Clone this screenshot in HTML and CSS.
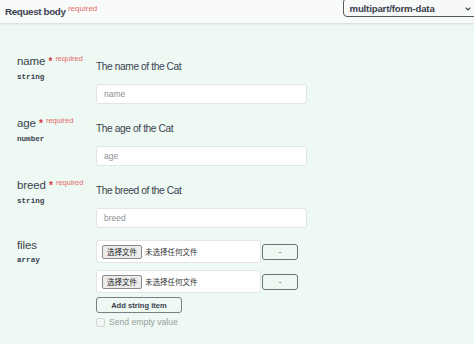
FILE: index.html
```html
<!DOCTYPE html>
<html>
<head>
<meta charset="utf-8">
<link rel="stylesheet" href="styles.css">
</head>
<body>
<div class="section-header">
  <div class="title">Request body <span class="req">required</span></div>
  <div class="select">
    <span>multipart/form-data</span>
    <svg class="chev" width="6" height="4" viewBox="0 0 6 4"><path d="M0.6 0.6 L3 3 L5.4 0.6" fill="none" stroke="#3b4151" stroke-width="1.2"/></svg>
  </div>
</div>
<div class="body">
  <div class="param">
    <div class="param-label">
      <div class="pname">name <span class="star">*</span> <span class="req">required</span></div>
      <div class="ptype">string</div>
    </div>
    <div class="param-value">
      <p class="desc">The name of the Cat</p>
      <input class="text-input" placeholder="name">
    </div>
  </div>
  <div class="param">
    <div class="param-label">
      <div class="pname">age <span class="star">*</span> <span class="req">required</span></div>
      <div class="ptype">number</div>
    </div>
    <div class="param-value">
      <p class="desc">The age of the Cat</p>
      <input class="text-input" placeholder="age">
    </div>
  </div>
  <div class="param">
    <div class="param-label">
      <div class="pname">breed <span class="star">*</span> <span class="req">required</span></div>
      <div class="ptype">string</div>
    </div>
    <div class="param-value">
      <p class="desc">The breed of the Cat</p>
      <input class="text-input" placeholder="breed">
    </div>
  </div>
  <div class="param">
    <div class="param-label">
      <div class="pname">files</div>
      <div class="ptype">array</div>
    </div>
    <div class="param-value files">
      <div class="file-row">
        <div class="file-box"><span class="file-btn">选择文件</span><span class="file-text">未选择任何文件</span></div>
        <button class="minus-btn">-</button>
      </div>
      <div class="file-row">
        <div class="file-box"><span class="file-btn">选择文件</span><span class="file-text">未选择任何文件</span></div>
        <button class="minus-btn">-</button>
      </div>
      <button class="add-btn">Add string item</button>
      <label class="empty-row"><span class="checkbox"></span>Send empty value</label>
    </div>
  </div>
</div>
</body>
</html>
```
FILE: styles.css
```css
html, body {
  margin: 0;
  padding: 0;
}
body {
  width: 474px;
  height: 347px;
  overflow: hidden;
  background: #ffffff;
  font-family: "Liberation Sans", Arial, sans-serif;
  color: #3b4151;
}
.section-header {
  display: flex;
  justify-content: space-between;
  align-items: flex-start;
  height: 23px;
  background: #f8fbf9;
  box-shadow: 0 1px 2px rgba(0, 0, 0, 0.12);
  position: relative;
  z-index: 1;
}
.title {
  padding: 3px 0 0 5px;
  font-size: 9.8px;
  font-weight: bold;
  letter-spacing: -0.35px;
  line-height: 12px;
}
.req {
  font-size: 7.5px;
  font-weight: normal;
  letter-spacing: 0;
  color: #e46a6a;
  vertical-align: 4px;
}
.title .req {
  font-size: 8px;
}
.select {
  flex-shrink: 0;
  width: 135px;
  height: 19px;
  margin-top: -2px;
  margin-right: -4px;
  box-sizing: border-box;
  border: 1.5px solid #555861;
  border-radius: 4px;
  background: #f7f8f8;
  display: flex;
  align-items: center;
  justify-content: space-between;
  padding: 2px 6px 0 5.5px;
  font-size: 9.6px;
  font-weight: bold;
  letter-spacing: -0.15px;
}
.body {
  height: 321px;
  box-sizing: border-box;
  background: #edf9f2;
  padding: 29px 0 0 17px;
}
.param {
  display: grid;
  grid-template-columns: 79px 1fr;
  padding-bottom: 10px;
}
.pname {
  font-size: 11.5px;
  line-height: 14px;
  white-space: nowrap;
  letter-spacing: -0.1px;
}
.star {
  color: #d03b3b;
  font-size: 10px;
  font-weight: bold;
  vertical-align: 0;
}
.ptype {
  font-family: "Liberation Mono", "Courier New", monospace;
  font-weight: bold;
  font-size: 7.6px;
  line-height: 10px;
  margin-top: 3px;
}
.desc {
  margin: 8px 0 0;
  font-size: 10.2px;
  letter-spacing: -0.4px;
  line-height: 14px;
}
.text-input {
  display: block;
  margin-top: 10px;
  width: 211px;
  height: 20px;
  box-sizing: border-box;
  border: 1px solid #e1e6e3;
  border-radius: 3px;
  background: #ffffff;
  padding: 0 7px;
  font-family: "Liberation Sans", Arial, sans-serif;
  font-size: 8.5px;
  color: #3b4151;
  outline: none;
}
.text-input::placeholder {
  color: #8d8f93;
}
.files {
  padding-top: 2px;
}
.file-row {
  display: flex;
  align-items: center;
  gap: 1px;
}
.file-row + .file-row {
  margin-top: 7px;
}
.file-box {
  width: 165px;
  height: 23px;
  box-sizing: border-box;
  border: 1px solid #e1e6e3;
  border-radius: 3px;
  background: #ffffff;
  display: flex;
  align-items: center;
  padding: 0 5px;
  gap: 3px;
  font-family: "Noto Sans CJK SC", sans-serif;
  font-size: 7.5px;
}
.file-btn {
  display: flex;
  align-items: center;
  height: 12px;
  padding: 0 4px;
  border: 1px solid #8b8b8b;
  border-radius: 2px;
  background: #ececec;
  color: #222;
}
.file-text {
  color: #333;
}
.minus-btn {
  width: 36px;
  height: 16px;
  box-sizing: border-box;
  border: 1.5px solid #6e7178;
  border-radius: 3px;
  background: transparent;
  font-family: "Liberation Sans", Arial, sans-serif;
  font-size: 8px;
  color: #3b4151;
  padding: 0;
}
.add-btn {
  display: block;
  margin-top: 4px;
  width: 86px;
  height: 16px;
  box-sizing: border-box;
  border: 1px solid #7a7d83;
  border-radius: 3px;
  background: transparent;
  font-family: "Liberation Sans", Arial, sans-serif;
  font-size: 7.6px;
  font-weight: bold;
  color: #3b4151;
  padding: 0;
}
.empty-row {
  display: flex;
  align-items: center;
  gap: 4px;
  margin-top: 4px;
  font-size: 8.6px;
  color: #9a9da2;
}
.checkbox {
  width: 7px;
  height: 7px;
  border: 1px solid #d3d7d5;
  border-radius: 2px;
  background: #f4f6f5;
}
```
